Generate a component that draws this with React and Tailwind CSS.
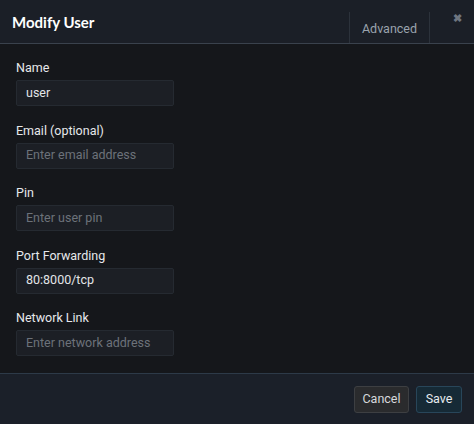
import React from "react";

const Field = ({ label, value, placeholder }) => (
  <div className="flex flex-col">
    <label className="text-[12.5px] leading-4 text-[#e6e8eb] mb-[4px]">{label}</label>
    <div className="w-[158px] h-[26px] bg-[#1c1f25] border border-[#252a31] rounded-[2px] flex items-center px-[9px] text-[12.5px]">
      {value ? (
        <span className="text-[#e3e5e8]">{value}</span>
      ) : (
        <span className="text-[#6c727a]">{placeholder}</span>
      )}
    </div>
  </div>
);

export default function App() {
  return (
    <div className="w-[474px] h-[424px] bg-[#15171b] flex flex-col" style={{ fontFamily: 'Roboto, "Liberation Sans", Arial, sans-serif' }}>
      <div className="h-[44px] bg-[#1b1f27] border-b border-[#3a424d] flex items-stretch">
        <div className="flex-1 pl-[12px] pt-[11px] text-[15px] font-bold text-white" style={{ fontFamily: 'Lato, sans-serif' }}>
          Modify User
        </div>
        <div className="mt-[12px] pt-[3px] w-[81px] border-l border-r border-[#2c323b] flex items-center justify-center text-[12.5px] text-[#9aa3ad]">
          Advanced
        </div>
        <div className="w-[44px] flex justify-center pt-[13px] pl-[10px] text-[#6f7680] text-[11px] font-bold leading-none">
          ✖
        </div>
      </div>
      <div className="flex-1 px-[16px] pt-[16px] flex flex-col gap-[16.5px]">
        <Field label="Name" value="user" />
        <Field label="Email (optional)" placeholder="Enter email address" />
        <Field label="Pin" placeholder="Enter user pin" />
        <Field label="Port Forwarding" value="80:8000/tcp" />
        <Field label="Network Link" placeholder="Enter network address" />
      </div>
      <div className="h-[51px] bg-[#1b2029] border-t border-[#2d3a48] flex items-center justify-end gap-[7px] pr-[12px]">
        <button className="w-[55px] h-[27px] bg-[#2a2b2d] border border-[#3d3f42] rounded-[3px] text-[12.5px] text-[#d7d9dc]">
          Cancel
        </button>
        <button className="w-[46px] h-[27px] bg-[#162a36] border border-[#28465a] rounded-[3px] text-[12.5px] text-[#e6ecf0]">
          Save
        </button>
      </div>
    </div>
  );
}
